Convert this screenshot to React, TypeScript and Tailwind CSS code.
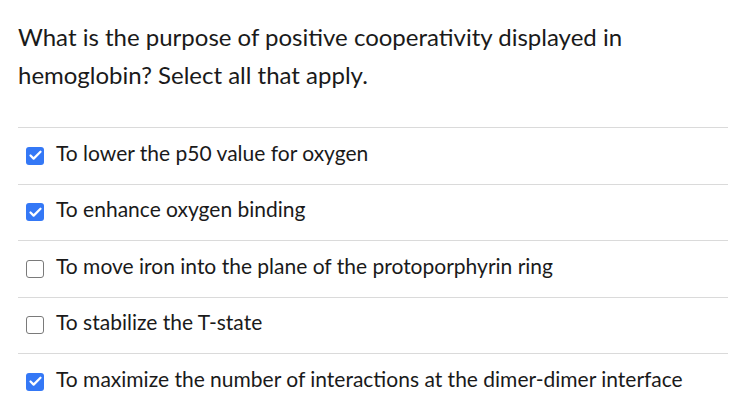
import { Check } from 'lucide-react'

const OPTIONS = [
  { label: 'To lower the p50 value for oxygen', checked: true },
  { label: 'To enhance oxygen binding', checked: true },
  { label: 'To move iron into the plane of the protoporphyrin ring', checked: false },
  { label: 'To stabilize the T-state', checked: false },
  { label: 'To maximize the number of interactions at the dimer-dimer interface', checked: true },
]

export default function App() {
  return (
    <div className="h-[414px] w-[744px] bg-white px-[18px] pt-[18px] text-[#1a1a1a] font-['Lato','Liberation_Sans',sans-serif]">
      <p className="w-[660px] text-[24px] leading-[38px]">
        What is the purpose of positive cooperativity displayed in hemoglobin? Select all that apply.
      </p>

      <div className="mt-[33px] w-[710px]">
        {OPTIONS.map((o) => (
          <div
            key={o.label}
            className="box-border flex h-[56.5px] items-center gap-[12px] border-t border-[#dadada] pl-[8px]"
          >
            {o.checked ? (
              <span className="flex h-[18px] w-[18px] items-center justify-center rounded-[3px] bg-[#3478f6]">
                <Check className="h-[15px] w-[15px] text-white" strokeWidth={3.6} />
              </span>
            ) : (
              <span className="h-[18px] w-[18px] rounded-[3px] border-[1.5px] border-[#7a7a7a] bg-white" />
            )}
            <span className="pb-[6px] text-[21px] leading-[24px]">{o.label}</span>
          </div>
        ))}
      </div>
    </div>
  )
}
